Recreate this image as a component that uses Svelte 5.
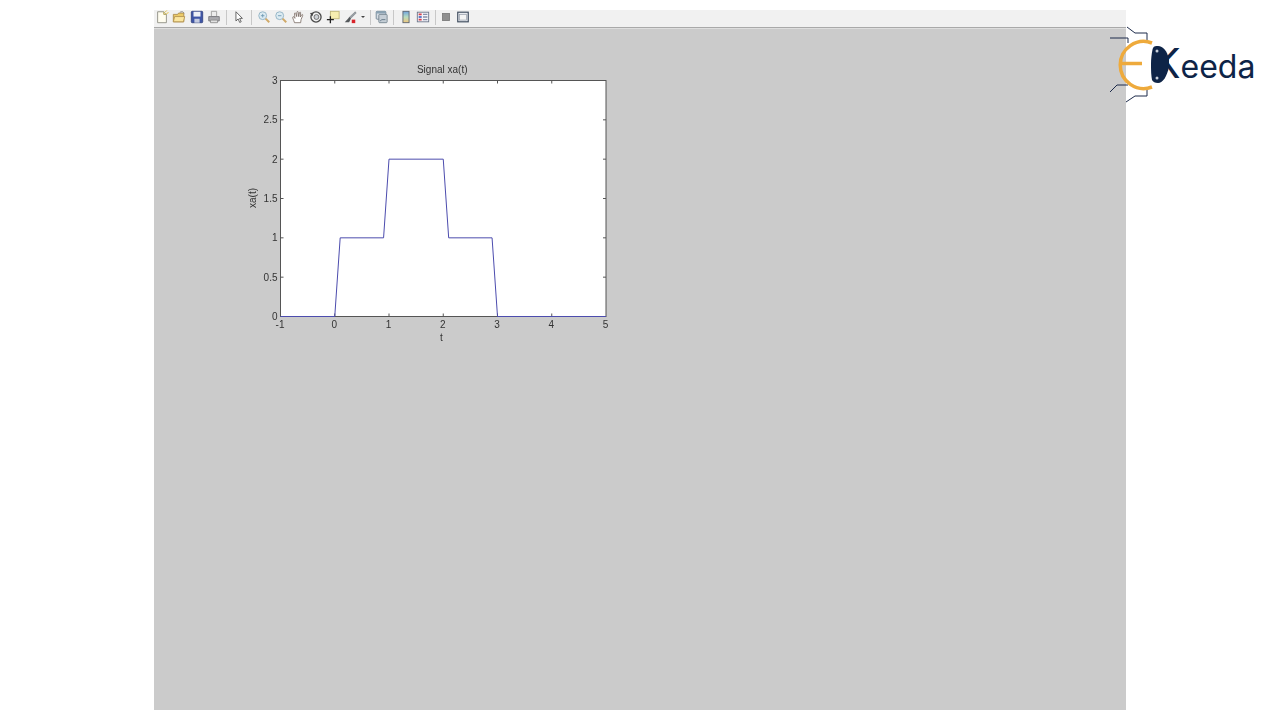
<script lang="ts">
  // plot geometry, data coords mapped to svg pixels
  const plot = { x: 126.5, y: 52.5, w: 325.5, h: 236 };
  const sx = (t: number) => plot.x + ((t + 1) / 6) * plot.w;
  const sy = (v: number) => plot.y + plot.h - (v / 3) * plot.h;

  const xTicks = [-1, 0, 1, 2, 3, 4, 5];
  const yTicks = [0, 0.5, 1, 1.5, 2, 2.5, 3];

  const signal = [
    [-1, 0], [0, 0], [0.1, 1], [0.9, 1], [1, 2], [2, 2], [2.1, 1], [2.9, 1], [3, 0], [5, 0],
  ];
  const line = signal.map(([t, v]) => `${sx(t)},${sy(v)}`).join(" ");
</script>

<div class="page">
  <div class="stage">
    <div class="toolbar">
      <span class="tool">
        <svg viewBox="0 0 16 16"><path d="M3 2h7l3 3v9.500H3z" fill="#fffdf0" stroke="#8c8c80" /><path d="M10 2v3h3" fill="#f6e7a0" stroke="#a89a50" /><path d="M11.500 2.500L13.500 0.500M13 4l2.500-1" stroke="#e8c030" /></svg>
      </span>
      <span class="tool">
        <svg viewBox="0 0 16 16"><path d="M1.500 5h5l1-1.500h6v10h-12z" fill="#eccb68" stroke="#a9894a" /><path d="M1.500 13.500l1.500-6h11.500l-1.500 6z" fill="#fbe6a0" stroke="#b3944f" /><path d="M9 2.500q3-2 5 1" fill="none" stroke="#8a8a8a" /></svg>
      </span>
      <span class="tool">
        <svg viewBox="0 0 16 16"><rect x="1.500" y="1.500" width="13" height="13" rx="1" fill="#3e55a6" stroke="#33427f" /><rect x="4" y="2" width="8" height="5.500" fill="#eef0f6" /><rect x="5" y="10" width="6" height="4.500" fill="#c4cbe0" /></svg>
      </span>
      <span class="tool">
        <svg viewBox="0 0 16 16"><path d="M5 1.500h6v6H5z" fill="#ececec" stroke="#9a9a9a" /><path d="M2 7.500h12v5H2z" fill="#a9a9ad" stroke="#77777c" /><path d="M4 11.500h8v3H4z" fill="#e2e2e2" stroke="#8e8e8e" /></svg>
      </span>
      <i class="sep"></i>
      <span class="tool arrow">
        <svg viewBox="0 0 16 16"><path d="M4.500 2v10.500l2.500-2.300 1.800 4 1.700-.8-1.800-3.800h3.200z" fill="#fff" stroke="#444" stroke-width=".9" /></svg>
      </span>
      <i class="sep"></i>
      <span class="tool">
        <svg viewBox="0 0 16 16"><circle cx="6.500" cy="6.500" r="4.500" fill="#dcebf2" stroke="#8fb0c2" /><path d="M9.800 9.800l4.200 4.200" stroke="#d0a968" stroke-width="2.200" /><path d="M4.500 6.500h4M6.500 4.500v4" stroke="#6f9ab3" /></svg>
      </span>
      <span class="tool">
        <svg viewBox="0 0 16 16"><circle cx="6.500" cy="6.500" r="4.500" fill="#dcebf2" stroke="#8fb0c2" /><path d="M9.800 9.800l4.200 4.200" stroke="#d0a968" stroke-width="2.200" /><path d="M4.500 6.500h4" stroke="#6f9ab3" /></svg>
      </span>
      <span class="tool">
        <svg viewBox="0 0 16 16"><path d="M4 14.500C3 11 1.500 9 2 8s2 .5 2.500 1.500L4 4c0-1 1.300-1 1.500 0l1 3.500.3-5c0-1 1.400-1 1.500 0l.4 5 1-4.500c.2-1 1.500-.7 1.300.3L10.500 8l1.700-2.500c.6-.8 1.600-.2 1.200.7L11.500 11l-.5 3.500z" fill="#fff" stroke="#75665e" stroke-width=".9" /></svg>
      </span>
      <span class="tool">
        <svg viewBox="0 0 16 16"><circle cx="8" cy="8" r="5.800" fill="none" stroke="#4a4a4a" stroke-width="1.500" /><circle cx="8.500" cy="8" r="2.800" fill="#cfd3d8" stroke="#666" /><path d="M1 3.500l4-.5-1 4" fill="#4a4a4a" /></svg>
      </span>
      <span class="tool">
        <svg viewBox="0 0 16 16"><rect x="5" y="1.500" width="10" height="8.500" fill="#f6eeb0" stroke="#bdb577" /><path d="M1 11h8M5 7v8" stroke="#222" stroke-width="1.500" /></svg>
      </span>
      <span class="tool">
        <svg viewBox="0 0 16 16"><path d="M14 2L7 8.500l1.500 1.500L15 3.500z" fill="#9aa0a6" stroke="#6a6f74" stroke-width=".6" /><path d="M7.500 8L2 14h5l2-4z" fill="#55595c" /><rect x="10" y="11" width="4" height="4" fill="#d8232a" /></svg>
      </span>
      <span class="caret"></span>
      <i class="sep"></i>
      <span class="tool pull">
        <svg viewBox="0 0 16 16"><rect x="2.500" y="1.500" width="11" height="9" rx="1" fill="#d6dde4" stroke="#6c8090" /><rect x="2.500" y="1.500" width="11" height="2.500" fill="#8aa2b3" /><rect x="5.500" y="5" width="9.500" height="9.500" rx="1" fill="#c5ced6" stroke="#75858f" /><path d="M7 12.500l2-1.500h4" fill="none" stroke="#607484" /></svg>
      </span>
      <i class="sep"></i>
      <span class="tool">
        <svg viewBox="0 0 16 16"><defs><linearGradient id="cbar" x1="0" y1="0" x2="0" y2="1"><stop offset="0" stop-color="#6fa3df" /><stop offset=".5" stop-color="#b6dcc0" /><stop offset="1" stop-color="#f2c67a" /></linearGradient></defs><rect x="4.500" y="1.500" width="7" height="13" fill="url(#cbar)" stroke="#5a6470" /></svg>
      </span>
      <span class="tool">
        <svg viewBox="0 0 16 16"><rect x="1.500" y="2.500" width="13" height="11" fill="#f4f5fa" stroke="#6a7488" /><path d="M3 5h3.500" stroke="#d8404a" stroke-width="2" /><path d="M3 8h3.500" stroke="#4a68c0" stroke-width="2" /><path d="M3 11h3.500" stroke="#d8404a" stroke-width="2" /><path d="M8 5h5M8 8h5M8 11h5" stroke="#8890a8" stroke-width="1.500" /></svg>
      </span>
      <i class="sep"></i>
      <span class="tool pull">
        <svg viewBox="0 0 16 16"><rect x="4" y="4" width="8" height="8" fill="#8f8f8f" stroke="#7c7c7c" /></svg>
      </span>
      <span class="tool">
        <svg viewBox="0 0 16 16"><rect x="2" y="2.500" width="12" height="11" fill="#e6e9ee" stroke="#3c4a5c" stroke-width="1.300" /><rect x="4" y="5" width="8" height="6.500" fill="#f4f4f4" stroke="#8a93a0" stroke-width=".7" /></svg>
      </span>
    </div>

    <div class="figure">
      <svg class="chart" viewBox="0 0 520 330">
        <rect x={plot.x} y={plot.y} width={plot.w} height={plot.h} fill="#fff" stroke="#555" stroke-width="1" />
        {#each xTicks as t, i}
          {#if i > 0 && i < xTicks.length - 1}
            <path class="tick" d="M{sx(t)} {plot.y}v3M{sx(t)} {plot.y + plot.h}v-3" />
          {/if}
          <text x={sx(t) - 0.5} y={plot.y + plot.h + 11} text-anchor="middle">{t}</text>
        {/each}
        {#each yTicks as v, i}
          {#if i > 0 && i < yTicks.length - 1}
            <path class="tick" d="M{plot.x} {sy(v)}h3M{plot.x + plot.w} {sy(v)}h-3" />
          {/if}
          <text x={plot.x - 3} y={sy(v) + 3.5} text-anchor="end">{v}</text>
        {/each}
        <polyline points={line} fill="none" stroke="#4c4cae" stroke-width="1" />
        <text x={plot.x + plot.w / 2 - 1} y="44.5" text-anchor="middle">Signal xa(t)</text>
        <text x="287.5" y="312.5" text-anchor="middle">t</text>
        <text transform="translate(102 170) rotate(-90)" text-anchor="middle">xa(t)</text>
      </svg>
    </div>
  </div>

  <!-- logo coords: page x - 1108, page y - 25 -->
  <svg class="logo" viewBox="0 0 150 80">
    <path d="M19 2l8 6h12v8M2 13h18v5M2 67l7-7h11M18 77l9-6h12v-6" fill="none" stroke="#1c2a4a" stroke-width="1" />
    <path d="M44 18A23.500 23.500 0 1 0 44 62" fill="none" stroke="#eeaa3c" stroke-width="3.500" />
    <path d="M11 38.500h23" stroke="#eeaa3c" stroke-width="3.500" />
    <text class="brand" x="45" y="53"><tspan class="cap">K</tspan>eeda</text>
    <path d="M50 21c5 0 9 5 11 13v8c-2 9-6 16-11 16-3 0-5-1-6-3-1-5-1-11-1-16 0-6 1-13 2-16 1-2 3-2 5-2z" fill="#0e2447" />
    <circle cx="49" cy="26" r="1.500" fill="#c8d0dc" />
    <circle cx="49" cy="53" r="1.500" fill="#c8d0dc" />
  </svg>
</div>

<style>
  :global(body) {
    margin: 0;
    background: #fff;
  }

  .page {
    position: relative;
    width: 1280px;
    height: 720px;
    padding: 10px 154px;
    box-sizing: border-box;
    overflow: hidden;
  }

  .stage {
    width: 972px;
    height: 700px;
    background: #cbcbcb;
    display: flex;
    flex-direction: column;
  }

  .toolbar {
    height: 14px;
    padding-bottom: 3px;
    background: #f1f1f1;
    border-bottom: 1px solid #a9a9a9;
    box-shadow: 0 1px 0 #dedede;
    display: flex;
    align-items: center;
    flex: none;
  }

  .tool {
    width: 17.4px;
    height: 14px;
    display: flex;
    align-items: center;
    justify-content: center;
    flex: none;
  }

  .tool:first-child {
    margin-left: -0.75px;
  }

  .tool svg {
    width: 14px;
    height: 14px;
    filter: blur(0.3px);
  }

  .arrow {
    width: 18px;
  }

  .pull {
    margin-left: -1.5px;
  }

  .sep {
    width: 1px;
    height: 15px;
    margin: 0 3px;
    background: #c8c8c8;
    flex: none;
  }

  .caret {
    width: 0;
    height: 0;
    margin: 0 2px;
    border-left: 2px solid transparent;
    border-right: 2px solid transparent;
    border-top: 2px solid #444;
    flex: none;
  }

  .figure {
    flex: 1;
  }

  .chart {
    display: block;
    width: 520px;
    height: 330px;
    filter: blur(0.3px);
  }

  .chart text {
    font-family: "Liberation Sans", Arial, sans-serif;
    font-size: 10px;
    fill: #333;
  }

  .tick {
    stroke: #555;
    stroke-width: 1;
    fill: none;
  }

  .logo {
    position: absolute;
    left: 1108px;
    top: 25px;
    width: 150px;
    height: 80px;
  }

  .brand {
    font-family: Inter, Lato, sans-serif;
    font-size: 32px;
    font-weight: 400;
    fill: #0e2447;
  }

  .cap {
    font-size: 41px;
  }
</style>
